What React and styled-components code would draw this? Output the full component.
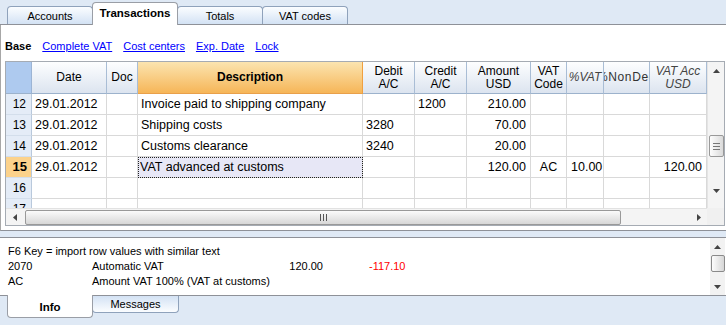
import React from 'react';
import styled, { createGlobalStyle, css } from 'styled-components';

const COLS = '26px 75px 31px 225px 52px 52px 64px 36px 37px 46px 57px';

const GlobalStyle = createGlobalStyle`
  html, body {
    margin: 0;
    padding: 0;
    background: #dfe9f5;
  }
  body {
    font-family: "Liberation Sans", Arial, sans-serif;
    color: #000;
  }
`;

const Window = styled.div`
  width: 726px;
  height: 325px;
  overflow: hidden;
  background: #dfe9f5;
  display: flex;
  flex-direction: column;
`;

const TabStrip = styled.div`
  height: 25px;
  box-sizing: border-box;
  border-bottom: 1px solid #8e9198;
  display: flex;
  align-items: flex-end;
  padding-left: 7px;
`;

const Tab = styled.div`
  width: 86px;
  height: 18px;
  margin-right: -1px;
  box-sizing: border-box;
  display: flex;
  align-items: center;
  justify-content: center;
  border: 1px solid #8fa2bb;
  border-bottom: none;
  border-radius: 4px 4px 0 0;
  background: linear-gradient(#fbfdff, #d3e2f4);
  font-size: 11px;

  ${(p) => p.$active && css`
    height: 23px;
    margin-bottom: -1px;
    padding-bottom: 2px;
    background: #fff;
    border-color: #9a9ea6;
    font-weight: bold;
    font-size: 11.5px;
    position: relative;
    z-index: 1;
  `}
`;

const MainPanel = styled.div`
  height: 206px;
  box-sizing: border-box;
  background: #fff;
  border-bottom: 1px solid #8e9198;
  border-left: 1px solid #a7a7a7;
  display: flex;
  flex-direction: column;
`;

const LinkBar = styled.div`
  height: 36px;
  box-sizing: border-box;
  padding: 13px 0 0 4px;
  display: flex;
  gap: 11px;
  font-size: 11px;
  line-height: 16px;
`;

const BaseLabel = styled.span`
  font-weight: bold;
`;

const NavLink = styled.a`
  color: #0000ff;
  text-decoration: underline;
  cursor: pointer;
`;

const GridBox = styled.div`
  margin-left: 4px;
  width: 720px;
  height: 165px;
  box-sizing: border-box;
  border: 1px solid #a5abb3;
  display: flex;
  flex-direction: column;
`;

const GridMain = styled.div`
  display: flex;
  height: 146px;
`;

const Table = styled.div`
  width: 701px;
  overflow: hidden;
`;

const HeaderRow = styled.div`
  display: grid;
  grid-template-columns: ${COLS};
  height: 32px;
`;

const HeadCell = styled.div`
  box-sizing: border-box;
  display: flex;
  flex-direction: column;
  align-items: center;
  justify-content: center;
  text-align: center;
  font-size: 12px;
  line-height: 13px;
  white-space: nowrap;
  overflow: hidden;
  border-right: 1px solid #a9bdd5;
  border-bottom: 1px solid #9cb2cc;
  background: linear-gradient(#fdfeff, #dce4ef);

  ${(p) => p.$variant === 'corner' && css`
    background: #aecaef;
    border-right-color: #9cb4d4;
  `}
  ${(p) => p.$variant === 'desc' && css`
    background: linear-gradient(#fbe4b0, #f6b658);
    border-right: 1px solid #f0a040;
    border-bottom-color: #e9a04a;
    font-weight: bold;
  `}
  ${(p) => p.$variant === 'calc' && css`
    font-style: italic;
    color: #444;
  `}
  ${(p) => p.$variant === 'plain' && css`
    color: #333;
    letter-spacing: 0.6px;
  `}
`;

const Body = styled.div`
  height: 114px;
  overflow: hidden;
`;

const Row = styled.div`
  display: grid;
  grid-template-columns: ${COLS};
  height: 21px;
`;

const RowHead = styled.div`
  box-sizing: border-box;
  background: #e4ecf7;
  border-right: 1px solid #b9c9dc;
  border-bottom: 1px solid #d3deeb;
  text-align: right;
  padding-right: 5px;
  font-size: 12px;
  line-height: 20px;

  ${(p) => p.$current && css`
    background: #fcd28b;
    font-weight: bold;
    font-size: 13px;
    padding-right: 4px;
  `}
`;

const Cell = styled.div`
  box-sizing: border-box;
  border-right: 1px solid #d9d9d9;
  border-bottom: 1px solid #d9d9d9;
  padding: 0 ${(p) => (p.$align === 'right' ? '4px' : '3px')};
  font-size: 12.5px;
  line-height: 20px;
  white-space: nowrap;
  overflow: hidden;
  text-align: ${(p) => p.$align || 'left'};

  ${(p) => p.$selected && css`
    background: #e7e7f6;
    outline: 1px dotted #222;
    outline-offset: -1px;
    padding-left: 2px;
  `}
`;

const VScroll = styled.div`
  width: 17px;
  background: #f4f4f4;
  border-left: 1px solid #e4e4e4;
  box-sizing: border-box;
  display: flex;
  flex-direction: column;
  align-items: center;
`;

const ArrowBox = styled.div`
  width: ${(p) => (p.$w ? `${p.$w}px` : '100%')};
  height: ${(p) => p.$h || 17}px;
  box-sizing: border-box;
  padding-top: ${(p) => p.$padTop || 0}px;
  display: flex;
  align-items: ${(p) => (p.$padTop ? 'flex-start' : 'center')};
  justify-content: center;
  flex-shrink: 0;
`;

const VThumb = styled.div`
  width: 15px;
  height: 22px;
  margin-top: ${(p) => p.$offset}px;
  box-sizing: border-box;
  border: 1px solid #999;
  border-radius: 2px;
  background: linear-gradient(90deg, #fdfdfd, #dadada);
  display: flex;
  flex-direction: column;
  align-items: center;
  justify-content: center;
  gap: 2px;
  flex-shrink: 0;
`;

const HGrip = styled.span`
  width: 7px;
  height: 1px;
  background: #777;
`;

const Spacer = styled.div`
  flex: 1;
`;

const HScrollRow = styled.div`
  display: flex;
  height: 17px;
`;

const HScroll = styled.div`
  width: 701px;
  background: #f4f4f4;
  border-top: 1px solid #e2e2e2;
  box-sizing: border-box;
  display: flex;
  align-items: center;
`;

const HThumb = styled.div`
  width: 596px;
  height: 15px;
  margin-left: 2px;
  box-sizing: border-box;
  border: 1px solid #999;
  border-radius: 2px;
  background: linear-gradient(#fbfbfb, #d7d7d7);
  display: flex;
  align-items: center;
  justify-content: center;
  gap: 2px;
`;

const VGrip = styled.span`
  width: 1px;
  height: 7px;
  background: #555;
`;

const Corner = styled.div`
  width: 17px;
  background: #f0f0f0;
`;

const Splitter = styled.div`
  height: 6px;
  background: #dfe9f5;
`;

const InfoPanel = styled.div`
  height: 59px;
  box-sizing: border-box;
  background: #fff;
  border-top: 1px solid #8e9198;
  border-bottom: 1px solid #8e9198;
  display: flex;
`;

const InfoText = styled.div`
  flex: 1;
  padding: 6px 0 0 8px;
  font-size: 11px;
  line-height: 15px;
`;

const InfoLine = styled.div`
  display: grid;
  grid-template-columns: 84px 176px 55px auto;
  white-space: nowrap;
`;

const Amount = styled.span`
  text-align: right;
`;

const Negative = styled.span`
  color: #ff0000;
  padding-left: 46px;
`;

const SpanRest = styled.span`
  grid-column: 2 / -1;
`;

const InfoScroll = styled.div`
  width: 15px;
  margin-right: 1px;
  background: #f2f2f2;
  display: flex;
  flex-direction: column;
  align-items: center;
`;

const SmallThumb = styled.div`
  width: 14px;
  height: 17px;
  box-sizing: border-box;
  border: 1px solid #8a8a8a;
  border-radius: 2px;
  background: linear-gradient(90deg, #fdfdfd, #d6d6d6);
`;

const BottomTabs = styled.div`
  flex: 1;
  display: flex;
  align-items: flex-start;
  padding-left: 7px;
`;

const BottomTab = styled.div`
  width: 87px;
  height: 17px;
  margin-right: -1px;
  box-sizing: border-box;
  display: flex;
  align-items: center;
  justify-content: center;
  border: 1px solid #8fa2bb;
  border-top: none;
  border-radius: 0 0 4px 4px;
  background: linear-gradient(#d3e2f4, #fbfdff);
  font-size: 11px;

  ${(p) => p.$active && css`
    width: 86px;
    height: 23px;
    margin-top: -1px;
    padding-top: 2px;
    background: #fff;
    border-color: #9a9ea6;
    font-weight: bold;
    font-size: 11.5px;
    position: relative;
    z-index: 1;
  `}
`;

const Arrow = ({ dir, color = '#444' }) => {
  const pts = {
    up: '0,4 3.5,0 7,4',
    down: '0,0 3.5,4 7,0',
    left: '4,0 0,3.5 4,7',
    right: '0,0 4,3.5 0,7',
  }[dir];
  const vertical = dir === 'up' || dir === 'down';
  return (
    <svg width={vertical ? 7 : 4} height={vertical ? 4 : 7} viewBox={vertical ? '0 0 7 4' : '0 0 4 7'}>
      <polygon points={pts} fill={color} />
    </svg>
  );
};

const headers = [
  { lines: [], variant: 'corner' },
  { lines: ['Date'] },
  { lines: ['Doc'] },
  { lines: ['Description'], variant: 'desc' },
  { lines: ['Debit', 'A/C'] },
  { lines: ['Credit', 'A/C'] },
  { lines: ['Amount', 'USD'] },
  { lines: ['VAT', 'Code'] },
  { lines: ['%VAT'], variant: 'calc' },
  { lines: ['%NonDed'], variant: 'plain' },
  { lines: ['VAT Acc', 'USD'], variant: 'calc' },
];

const rows = [
  { n: 12, date: '29.01.2012', desc: 'Invoice paid to shipping company', credit: '1200', amount: '210.00' },
  { n: 13, date: '29.01.2012', desc: 'Shipping costs', debit: '3280', amount: '70.00' },
  { n: 14, date: '29.01.2012', desc: 'Customs clearance', debit: '3240', amount: '20.00' },
  { n: 15, date: '29.01.2012', desc: 'VAT advanced at customs', amount: '120.00', code: 'AC', pct: '10.00', vatAcc: '120.00', current: true },
  { n: 16 },
  { n: 17 },
];

const App = () => (
  <Window>
    <GlobalStyle />
    <TabStrip>
      <Tab>Accounts</Tab>
      <Tab $active>Transactions</Tab>
      <Tab>Totals</Tab>
      <Tab>VAT codes</Tab>
    </TabStrip>

    <MainPanel>
      <LinkBar>
        <BaseLabel>Base</BaseLabel>
        <NavLink>Complete VAT</NavLink>
        <NavLink>Cost centers</NavLink>
        <NavLink>Exp. Date</NavLink>
        <NavLink>Lock</NavLink>
      </LinkBar>

      <GridBox>
        <GridMain>
          <Table>
            <HeaderRow>
              {headers.map((h, i) => (
                <HeadCell key={i} $variant={h.variant}>
                  {h.lines.map((l) => <span key={l}>{l}</span>)}
                </HeadCell>
              ))}
            </HeaderRow>
            <Body>
              {rows.map((r) => (
                <Row key={r.n}>
                  <RowHead $current={r.current}>{r.n}</RowHead>
                  <Cell>{r.date}</Cell>
                  <Cell />
                  <Cell $selected={r.current}>{r.desc}</Cell>
                  <Cell>{r.debit}</Cell>
                  <Cell>{r.credit}</Cell>
                  <Cell $align="right">{r.amount}</Cell>
                  <Cell $align="center">{r.code}</Cell>
                  <Cell $align="right">{r.pct}</Cell>
                  <Cell />
                  <Cell $align="right">{r.vatAcc}</Cell>
                </Row>
              ))}
            </Body>
          </Table>
          <VScroll>
            <ArrowBox $h={18}><Arrow dir="up" /></ArrowBox>
            <VThumb $offset={55}>
              <HGrip />
              <HGrip />
              <HGrip />
            </VThumb>
            <Spacer />
            <ArrowBox $h={26} $padTop={7}><Arrow dir="down" /></ArrowBox>
          </VScroll>
        </GridMain>
        <HScrollRow>
          <HScroll>
            <ArrowBox $h={15} $w={17}><Arrow dir="left" /></ArrowBox>
            <HThumb>
              <VGrip />
              <VGrip />
              <VGrip />
            </HThumb>
            <Spacer />
            <ArrowBox $h={15} $w={17}><Arrow dir="right" /></ArrowBox>
          </HScroll>
          <Corner />
        </HScrollRow>
      </GridBox>
    </MainPanel>

    <Splitter />

    <InfoPanel>
      <InfoText>
        <div>F6 Key = import row values with similar text</div>
        <InfoLine>
          <span>2070</span>
          <span>Automatic VAT</span>
          <Amount>120.00</Amount>
          <Negative>-117.10</Negative>
        </InfoLine>
        <InfoLine>
          <span>AC</span>
          <SpanRest>Amount VAT 100% (VAT at customs)</SpanRest>
        </InfoLine>
      </InfoText>
      <InfoScroll>
        <ArrowBox $h={17}><Arrow dir="up" /></ArrowBox>
        <SmallThumb />
        <Spacer />
        <ArrowBox $h={17}><Arrow dir="down" /></ArrowBox>
      </InfoScroll>
    </InfoPanel>

    <BottomTabs>
      <BottomTab $active>Info</BottomTab>
      <BottomTab>Messages</BottomTab>
    </BottomTabs>
  </Window>
);

export default App;
